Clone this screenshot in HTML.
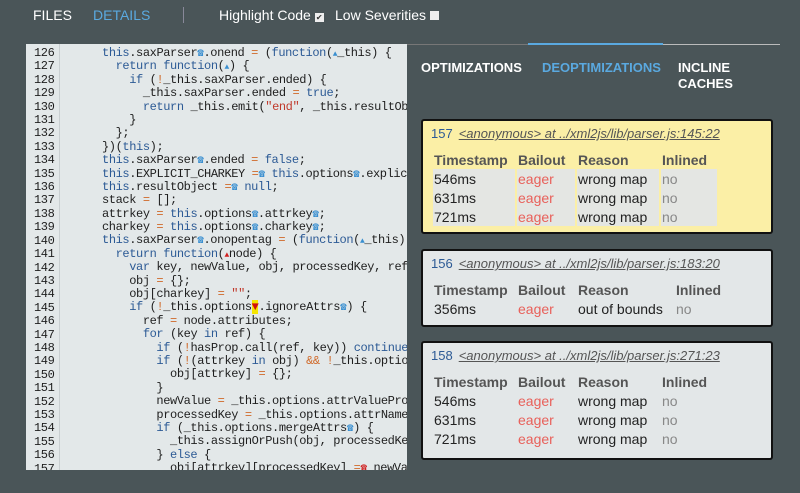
<!DOCTYPE html>
<html><head><meta charset="utf-8"><style>
*{margin:0;padding:0;box-sizing:border-box}
body{width:800px;height:493px;background:#4a5558;font-family:"Liberation Sans",sans-serif;position:relative;overflow:hidden;color:#fff}
.top{position:absolute;top:7px;font-size:14px;color:#fff}
.code{position:absolute;left:26px;top:44px;width:381px;height:426px;background:#e3e8e9;overflow:hidden}
.gut{position:absolute;left:0;top:0;width:34px;height:100%;border-right:1px solid #c9cfd1}
pre{position:absolute;top:1px;font-family:"Liberation Mono",monospace;font-size:12px;letter-spacing:-0.4px;line-height:13.4px;color:#1e1e1e;white-space:pre}
pre div{height:13.4px;overflow:visible}
.k{color:#2c5a95}.o{color:#d06a2a}.s{color:#c0392b}
.i,.t,.r{line-height:0;display:inline-block;height:0;vertical-align:baseline}
.i{color:#3a8fd0;font-size:11px}.t{color:#3a8fd0;font-size:8px}.r{color:#d02020;font-size:8px}
.y{background:#f5e500;color:#d01010}
.tabs{position:absolute;top:60px;font-size:13px;font-weight:bold;line-height:16px}
.card{position:absolute;left:421px;width:352px;border:2px solid #111;border-radius:3px;background:#e3e7e8;color:#222;font-size:14px}
.card.yl{background:#fbefa6}
.hd{position:absolute;left:8px;top:5px;font-size:13px;color:#555}
.hd b{color:#2c5a95;font-weight:normal;margin-right:6px}
.hd u{font-style:italic}
table{position:absolute;left:8px;border-collapse:separate;border-spacing:2px 0}
td,th{text-align:left;padding:0 1px;height:19px;font-weight:normal}
th{color:#555;font-weight:bold}
.yl td{background:#e4e6e3}
.e{color:#e8605a}.n{color:#888}
</style></head><body>
<div class="top" style="left:33px">FILES</div>
<div class="top" style="left:93px;color:#5aa9e0">DETAILS</div>
<div style="position:absolute;left:183px;top:7px;width:1px;height:16px;background:#889"></div>
<div class="top" style="left:219px">Highlight Code <span style="display:inline-block;width:9px;height:9px;background:#eee;color:#333;font-size:8px;line-height:9px;text-align:center">✔</span></div>
<div class="top" style="left:335px">Low Severities <span style="display:inline-block;width:9px;height:9px;background:#eee"></span></div>

<div class="code"><div class="gut"></div>
<pre style="left:8px;top:3px">126
127
128
129
130
131
132
133
134
135
136
137
138
139
140
141
142
143
144
145
146
147
148
149
150
151
152
153
154
155
156
157</pre>
<pre style="left:42px;top:3px"><div>     <span class="k">this</span>.saxParser<span class="i">☎</span>.onend <span class="o">=</span> (<span class="k">function</span>(<span class="t">▲</span>_this) {</div><div>       <span class="k">return function</span>(<span class="t">▲</span>) {</div><div>         <span class="k">if</span> (<span class="o">!</span>_this.saxParser.ended) {</div><div>           _this.saxParser.ended <span class="o">=</span> <span class="k">true</span>;</div><div>           <span class="k">return</span> _this.emit(<span class="s">"end"</span>, _this.resultObject);</div><div>         }</div><div>       };</div><div>     })(<span class="k">this</span>);</div><div>     <span class="k">this</span>.saxParser<span class="i">☎</span>.ended <span class="o">=</span> <span class="k">false</span>;</div><div>     <span class="k">this</span>.EXPLICIT_CHARKEY <span class="o">=</span><span class="i">☎</span> <span class="k">this</span>.options<span class="i">☎</span>.explicitCharkey;</div><div>     <span class="k">this</span>.resultObject <span class="o">=</span><span class="i">☎</span> <span class="k">null</span>;</div><div>     stack <span class="o">=</span> [];</div><div>     attrkey <span class="o">=</span> <span class="k">this</span>.options<span class="i">☎</span>.attrkey<span class="i">☎</span>;</div><div>     charkey <span class="o">=</span> <span class="k">this</span>.options<span class="i">☎</span>.charkey<span class="i">☎</span>;</div><div>     <span class="k">this</span>.saxParser<span class="i">☎</span>.onopentag <span class="o">=</span> (<span class="k">function</span>(<span class="t">▲</span>_this) {</div><div>       <span class="k">return function</span>(<span class="r">▲</span>node) {</div><div>         <span class="k">var</span> key, newValue, obj, processedKey, ref;</div><div>         obj <span class="o">=</span> {};</div><div>         obj[charkey] <span class="o">=</span> <span class="s">""</span>;</div><div>         <span class="k">if</span> (<span class="o">!</span>_this.options<span class="y">▼</span>.ignoreAttrs<span class="i">☎</span>) {</div><div>           ref <span class="o">=</span> node.attributes;</div><div>           <span class="k">for</span> (key <span class="k">in</span> ref) {</div><div>             <span class="k">if</span> (<span class="o">!</span>hasProp.call(ref, key)) <span class="k">continue</span>;</div><div>             <span class="k">if</span> (<span class="o">!</span>(attrkey <span class="k">in</span> obj) <span class="o">&amp;&amp;</span> <span class="o">!</span>_this.options</div><div>               obj[attrkey] <span class="o">=</span> {};</div><div>             }</div><div>             newValue <span class="o">=</span> _this.options.attrValueProcessors</div><div>             processedKey <span class="o">=</span> _this.options.attrNameProcessors</div><div>             <span class="k">if</span> (_this.options.mergeAttrs<span class="i">☎</span>) {</div><div>               _this.assignOrPush(obj, processedKey, newValue);</div><div>             } <span class="k">else</span> {</div><div>               obj[attrkey][processedKey] <span class="o">=</span><span class="r" style="font-size:11px">☎</span> newValue;</div></pre>
</div>

<div style="position:absolute;left:528px;top:43px;width:135px;height:2px;background:#5aa9e0"></div>
<div style="position:absolute;left:663px;top:44px;width:117px;height:1px;background:#bbb"></div>
<div style="position:absolute;left:407px;top:44px;width:121px;height:1px;background:#777"></div>
<div class="tabs" style="left:421px">OPTIMIZATIONS</div>
<div class="tabs" style="left:542px;color:#5aa9e0">DEOPTIMIZATIONS</div>
<div class="tabs" style="left:678px">INCLINE<br>CACHES</div>

<div class="card yl" style="top:119px;height:115px">
<div class="hd"><b>157</b><u>&lt;anonymous&gt; at ../xml2js/lib/parser.js:145:22</u></div>
<table style="top:29px"><tr><th style="width:82px">Timestamp</th><th style="width:58px">Bailout</th><th style="width:82px">Reason</th><th style="width:56px">Inlined</th></tr>
<tr><td>546ms</td><td class="e">eager</td><td>wrong map</td><td class="n">no</td></tr>
<tr><td>631ms</td><td class="e">eager</td><td>wrong map</td><td class="n">no</td></tr>
<tr><td>721ms</td><td class="e">eager</td><td>wrong map</td><td class="n">no</td></tr></table></div>

<div class="card" style="top:249px;height:78px">
<div class="hd"><b>156</b><u>&lt;anonymous&gt; at ../xml2js/lib/parser.js:183:20</u></div>
<table style="top:29px"><tr><th style="width:82px">Timestamp</th><th style="width:58px">Bailout</th><th style="width:96px">Reason</th><th>Inlined</th></tr>
<tr><td>356ms</td><td class="e">eager</td><td>out of bounds</td><td class="n">no</td></tr></table></div>

<div class="card" style="top:341px;height:119px">
<div class="hd"><b>158</b><u>&lt;anonymous&gt; at ../xml2js/lib/parser.js:271:23</u></div>
<table style="top:29px"><tr><th style="width:82px">Timestamp</th><th style="width:58px">Bailout</th><th style="width:82px">Reason</th><th>Inlined</th></tr>
<tr><td>546ms</td><td class="e">eager</td><td>wrong map</td><td class="n">no</td></tr>
<tr><td>631ms</td><td class="e">eager</td><td>wrong map</td><td class="n">no</td></tr>
<tr><td>721ms</td><td class="e">eager</td><td>wrong map</td><td class="n">no</td></tr></table></div>
</body></html>
